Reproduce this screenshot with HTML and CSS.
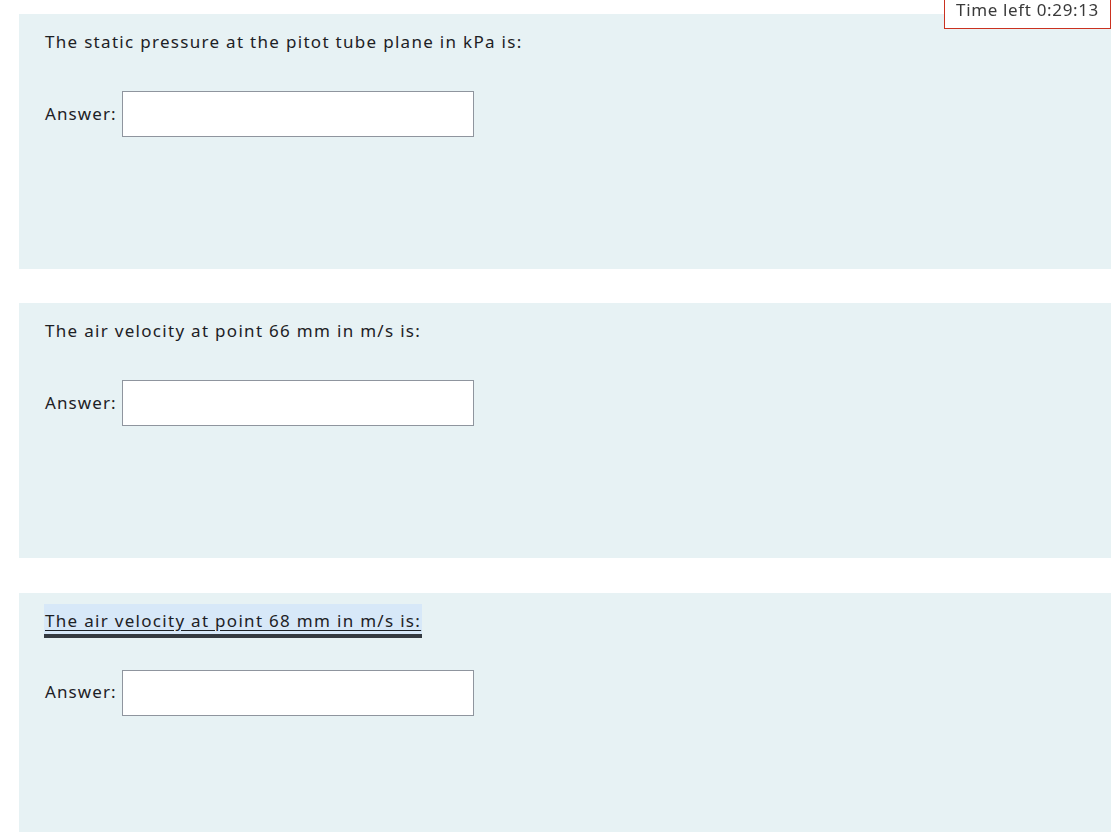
FILE: index.html
```html
<!DOCTYPE html>
<html lang="en">
<head>
    <meta charset="UTF-8">
    <meta name="viewport" content="width=device-width, initial-scale=1.0">
    <title>Quiz attempt</title>
    <link rel="stylesheet" href="styles.css">
</head>
<body>

<div class="timer">Time left 0:29:13</div>

<div class="page">
    <div class="que">
        <div class="qtext"><span>The static pressure at the pitot tube plane in kPa is:</span></div>
        <div class="answer">
            <label for="q1">Answer:</label>
            <input type="text" id="q1" class="answer-input">
        </div>
    </div>

    <div class="que">
        <div class="qtext"><span>The air velocity at point 66 mm in m/s is:</span></div>
        <div class="answer">
            <label for="q2">Answer:</label>
            <input type="text" id="q2" class="answer-input">
        </div>
    </div>

    <div class="que">
        <div class="qtext"><span class="focused">The air velocity at point 68 mm in m/s is:</span></div>
        <div class="answer">
            <label for="q3">Answer:</label>
            <input type="text" id="q3" class="answer-input">
        </div>
    </div>
</div>

</body>
</html>
```

FILE: styles.css
```css
body {
    margin: 0;
    font-family: "Noto Sans", Arial, sans-serif;
    font-size: 17px;
    color: #1d2125;
    background: #fff;
}
.page {
    padding: 14px 2px 0 19px;
}
.que {
    background: #e7f2f4;
    height: 255px;
    padding: 11px 25px 0;
    box-sizing: border-box;
    margin-bottom: 34.4px;
}
.qtext span {
    display: inline-block;
    padding: 4px 1px 0;
    line-height: 26px;
    letter-spacing: 1.3px;
    border-bottom: 4px solid transparent;
}
.qtext .focused {
    background: #d7e8f8;
    text-decoration: underline;
    text-underline-offset: 3px;
    border-bottom-color: #343a40;
}
.answer {
    display: flex;
    align-items: center;
    gap: 5px;
    margin-top: 32px;
    padding-left: 1px;
}
.answer label {
    font-size: 17px;
    letter-spacing: 1.1px;
    position: relative;
    top: -1px;
}
.answer-input {
    width: 352px;
    height: 46px;
    box-sizing: border-box;
    border: 1px solid #8f959e;
    background: #fff;
    font: inherit;
}
.timer {
    position: fixed;
    top: -1px;
    right: 2px;
    height: 30px;
    box-sizing: border-box;
    padding: 0 11px;
    line-height: 19px;
    letter-spacing: 0.65px;
    border: 1px solid #ca3120;
    background: #fff;
    color: #3a3a3a;
    font-size: 17px;
    z-index: 10;
}
```
